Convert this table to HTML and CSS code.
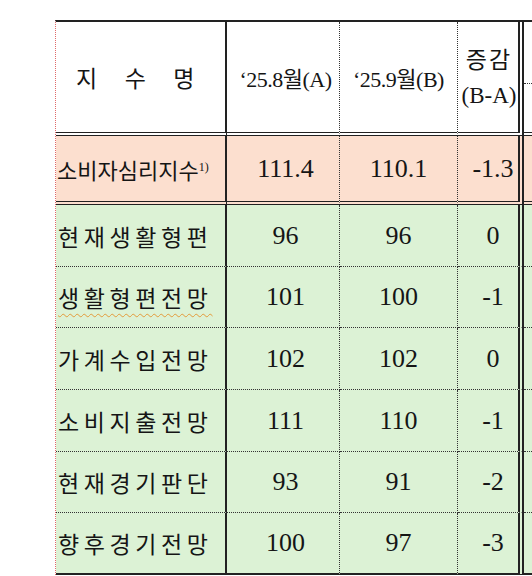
FILE: index.html
```html
<!DOCTYPE html>
<html lang="ko">
<head>
<meta charset="utf-8">
<title>소비자심리지수</title>
<link rel="stylesheet" href="styles.css">
</head>
<body>
<div class="page">
  <div class="grid">
    <div class="cell c1 head"><span class="title">지수명</span></div>
    <div class="cell c2 head"><span class="hdr">‘25.8월(A)</span></div>
    <div class="cell c3 head"><span class="hdr">‘25.9월(B)</span></div>
    <div class="cell c4 head"><span class="diff"><span class="kr">증감</span><br>(B-A)</span></div>
    <div class="cell c5 head top"><div class="sub"></div></div>

    <div class="cell c1 pink"><span class="label tight">소비자심리지수<sup class="note">1)</sup></span></div>
    <div class="cell c2 pink"><span class="num">111.4</span></div>
    <div class="cell c3 pink"><span class="num">110.1</span></div>
    <div class="cell c4 pink"><span class="num">-1.3</span></div>
    <div class="cell c5 pink"></div>

    <div class="cell c1 green"><span class="label">현재생활형편</span></div>
    <div class="cell c2 green"><span class="num">96</span></div>
    <div class="cell c3 green"><span class="num">96</span></div>
    <div class="cell c4 green"><span class="num">0</span></div>
    <div class="cell c5 green"></div>

    <div class="cell c1 green"><span class="label squiggle">생활형편전망</span></div>
    <div class="cell c2 green"><span class="num">101</span></div>
    <div class="cell c3 green"><span class="num">100</span></div>
    <div class="cell c4 green"><span class="num">-1</span></div>
    <div class="cell c5 green"></div>

    <div class="cell c1 green"><span class="label">가계수입전망</span></div>
    <div class="cell c2 green"><span class="num">102</span></div>
    <div class="cell c3 green"><span class="num">102</span></div>
    <div class="cell c4 green"><span class="num">0</span></div>
    <div class="cell c5 green"></div>

    <div class="cell c1 green"><span class="label">소비지출전망</span></div>
    <div class="cell c2 green"><span class="num">111</span></div>
    <div class="cell c3 green"><span class="num">110</span></div>
    <div class="cell c4 green"><span class="num">-1</span></div>
    <div class="cell c5 green"></div>

    <div class="cell c1 green"><span class="label">현재경기판단</span></div>
    <div class="cell c2 green"><span class="num">93</span></div>
    <div class="cell c3 green"><span class="num">91</span></div>
    <div class="cell c4 green"><span class="num">-2</span></div>
    <div class="cell c5 green"></div>

    <div class="cell c1 green last"><span class="label">향후경기전망</span></div>
    <div class="cell c2 green last"><span class="num">100</span></div>
    <div class="cell c3 green last"><span class="num">97</span></div>
    <div class="cell c4 green last"><span class="num">-3</span></div>
    <div class="cell c5 green last"></div>
  </div>
</div>
</body>
</html>
```
FILE: styles.css
```css
html, body {
  margin: 0;
  padding: 0;
  overflow: hidden;
  background: #ffffff;
}

.page {
  width: 532px;
  overflow: hidden;
  padding: 20px 0 0 55px;
  box-sizing: border-box;
}

.grid {
  display: grid;
  grid-template-columns: 171px 113px 118px 66px 80px;
  grid-template-rows: 114px 69px 62px 61px 62px 62px 61px 62px;
  width: max-content;
  border-top: 2px solid #222;
  border-left: 1px dotted #e06a6a;
  font-family: "Liberation Serif", "Noto Sans CJK KR", serif;
  color: #151515;
}

.cell {
  box-sizing: border-box;
  display: flex;
  align-items: center;
  justify-content: center;
  white-space: nowrap;
  border-right: 1px dotted #333;
  border-bottom: 1px dotted #333;
}

.c1 {
  justify-content: flex-start;
  border-right: 2px solid #222;
}

.c2 {
  padding-left: 5px;
}

.c4 {
  padding-left: 10px;
  border-right: 6px double #222;
}

.c5 {
  border-right: none;
}

.head {
  background: #ffffff;
  border-bottom: 4px double #222;
}

.pink {
  background: #fcdfcf;
  border-bottom: 4px double #222;
}

.green {
  background: #dcf2d5;
}

.last {
  border-bottom: 2px solid #222;
}

.top {
  align-items: flex-start;
}

.sub {
  box-sizing: border-box;
  width: 100%;
  height: 62px;
  border-bottom: 1px dotted #333;
}

.title {
  font-family: "Noto Sans CJK KR", sans-serif;
  font-size: 23px;
  letter-spacing: 27.5px;
  padding-left: 20px;
}

.hdr {
  font-size: 22px;
  letter-spacing: -0.5px;
}

.diff {
  font-size: 23px;
  line-height: 35px;
  text-align: center;
  margin-left: -8px;
}

.kr {
  font-family: "Noto Sans CJK KR", sans-serif;
  font-size: 23px;
  letter-spacing: 2px;
}

.label {
  font-family: "Noto Sans CJK KR", sans-serif;
  font-size: 23px;
  letter-spacing: 4.6px;
  padding-left: 2px;
}

.tight {
  font-size: 22px;
  letter-spacing: 0;
  padding-left: 1px;
}

.note {
  font-family: "Liberation Serif", serif;
  font-size: 12px;
  vertical-align: 8px;
  line-height: 0;
}

.squiggle {
  text-decoration: underline wavy #e39a3a;
  text-decoration-thickness: 1px;
  text-underline-offset: 6px;
}

.num {
  font-size: 26px;
}
```
